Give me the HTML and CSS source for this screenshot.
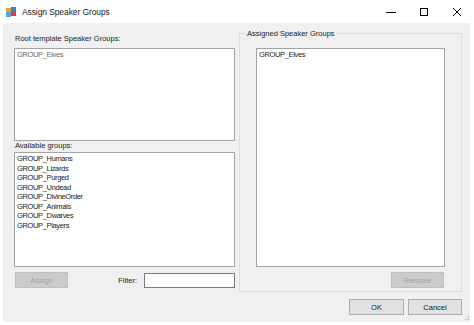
FILE: index.html
```html
<!DOCTYPE html>
<html lang="en">
<head>
    <meta charset="UTF-8">
    <title>Assign Speaker Groups</title>
    <link rel="stylesheet" href="styles.css">
</head>
<body>
    <div class="window">
        <div class="title-bar">
            <svg class="app-icon" width="10" height="10" viewBox="0 0 10 10">
                <rect x="0" y="1" width="5" height="4" fill="#e8a33a"/>
                <rect x="5" y="0" width="5" height="5" fill="#3f7fd0"/>
                <rect x="0" y="5" width="5" height="5" fill="#5aa0e6"/>
                <rect x="5" y="5" width="5" height="4" fill="#d9462f"/>
            </svg>
            <span class="title-text">Assign Speaker Groups</span>
            <div class="caption-buttons">
                <div class="caption-btn">
                    <svg width="10" height="10" viewBox="0 0 10 10"><path d="M0 5.5h10" stroke="#000" stroke-width="1"/></svg>
                </div>
                <div class="caption-btn">
                    <svg width="10" height="10" viewBox="0 0 10 10"><rect x="1.5" y="1.5" width="7" height="7" fill="none" stroke="#000" stroke-width="1"/></svg>
                </div>
                <div class="caption-btn">
                    <svg width="10" height="10" viewBox="0 0 10 10"><path d="M1 1l8 8M9 1l-8 8" stroke="#000" stroke-width="1"/></svg>
                </div>
            </div>
        </div>

        <div class="client">
            <div class="main">
                <div class="left-col">
                    <div class="label first">Root template Speaker Groups:</div>
                    <div class="listbox root-list disabled">
                        <div class="item">GROUP_Elves</div>
                    </div>
                    <div class="label">Available groups:</div>
                    <div class="listbox available-list">
                        <div class="item">GROUP_Humans</div>
                        <div class="item">GROUP_Lizards</div>
                        <div class="item">GROUP_Purged</div>
                        <div class="item">GROUP_Undead</div>
                        <div class="item">GROUP_DivineOrder</div>
                        <div class="item">GROUP_Animals</div>
                        <div class="item">GROUP_Dwarves</div>
                        <div class="item">GROUP_Players</div>
                    </div>
                    <div class="row">
                        <button class="btn" disabled>Assign</button>
                        <span class="filter-label">Filter:</span>
                        <input class="filter-input" type="text">
                    </div>
                </div>

                <fieldset class="group-box">
                    <legend>Assigned Speaker Groups</legend>
                    <div class="listbox assigned-list">
                        <div class="item">GROUP_Elves</div>
                    </div>
                    <div class="row right">
                        <button class="btn" disabled>Remove</button>
                    </div>
                </fieldset>
            </div>

            <div class="dialog-buttons">
                <button class="btn ok">OK</button>
                <button class="btn cancel">Cancel</button>
            </div>

            <svg class="grip" width="5" height="5" viewBox="0 0 5 5">
                <rect x="3" y="0" width="1" height="1" fill="#b8b8b8"/>
                <rect x="1.5" y="1.5" width="1" height="1" fill="#b8b8b8"/>
                <rect x="3" y="1.5" width="1" height="1" fill="#b8b8b8"/>
                <rect x="0" y="3" width="1" height="1" fill="#b8b8b8"/>
                <rect x="1.5" y="3" width="1" height="1" fill="#b8b8b8"/>
                <rect x="3" y="3" width="1" height="1" fill="#b8b8b8"/>
            </svg>
        </div>
    </div>
</body>
</html>
```

FILE: styles.css
```css
* {
    margin: 0;
    padding: 0;
    box-sizing: border-box;
}

body {
    font-family: 'Liberation Sans', Arial, sans-serif;
    font-size: 7.5px;
    color: #1a1a1a;
    background: #fff;
}

.window {
    width: 474px;
    height: 325px;
    background: #fff;
    display: flex;
    flex-direction: column;
}

.title-bar {
    height: 23px;
    display: flex;
    align-items: center;
    padding-left: 6px;
}

.app-icon {
    margin-right: 6px;
    margin-top: 1px;
}

.title-text {
    font-size: 8.5px;
    letter-spacing: -0.1px;
    margin-top: 1px;
}

.caption-buttons {
    margin-left: auto;
    display: flex;
    height: 100%;
    margin-right: 1px;
}

.caption-btn {
    width: 33px;
    height: 100%;
    display: flex;
    align-items: center;
    justify-content: center;
}

.client {
    position: relative;
    background: #f0f0f0;
    margin: 0 4px 3px 3px;
    flex: 1;
    display: flex;
    flex-direction: column;
    padding: 0 8px 0 11px;
}

.main {
    display: flex;
}

.left-col {
    width: 221px;
    display: flex;
    flex-direction: column;
}

.label {
    line-height: 9px;
    height: 9px;
    padding-left: 1px;
}

.label.first {
    margin-top: 11px;
    margin-bottom: 5px;
}

.listbox {
    background: #fff;
    border: 1px solid #a3a3a3;
    padding: 1px 2px;
    font-size: 7.5px;
    letter-spacing: -0.35px;
}

.listbox .item {
    line-height: 9.5px;
    white-space: nowrap;
}

.listbox.disabled .item {
    color: #6d6d6d;
}

.root-list {
    height: 93px;
}

.available-list {
    height: 115px;
    margin-top: 2px;
}

.row {
    display: flex;
    align-items: center;
    margin-top: 5px;
    height: 16px;
}

.row.right {
    justify-content: flex-end;
}

.btn {
    font-family: 'Liberation Sans', Arial, sans-serif;
    font-size: 7.5px;
    width: 54px;
    height: 16px;
    background: #e1e1e1;
    border: 1px solid #adadad;
    color: #1a1a1a;
}

.btn:disabled {
    background: #cccccc;
    border-color: #bfbfbf;
    color: #a0a0a0;
}

.left-col .btn {
    margin-left: 1px;
    width: 53px;
}

.filter-label {
    margin-left: auto;
    margin-right: 7px;
}

.filter-input {
    width: 91px;
    height: 15px;
    border: 1px solid #7a7a7a;
    background: #fff;
    margin-top: 1px;
}

.group-box {
    margin-top: 6px;
    margin-left: 4px;
    width: 223px;
    height: 263px;
    border: 1px solid #dcdcdc;
    padding: 0 16px 3px 16px;
}

.group-box legend {
    margin-left: -10px;
    padding: 0 1px;
    line-height: 9px;
    height: 9px;
}

.assigned-list {
    margin-top: 10px;
    height: 219px;
}

.group-box .btn {
    width: 53px;
    margin-right: 1px;
}

.dialog-buttons {
    display: flex;
    justify-content: flex-end;
    gap: 4px;
    margin-top: 7px;
}

.dialog-buttons .ok {
    width: 55px;
}

.grip {
    position: absolute;
    right: 0;
    bottom: 1px;
}
```
